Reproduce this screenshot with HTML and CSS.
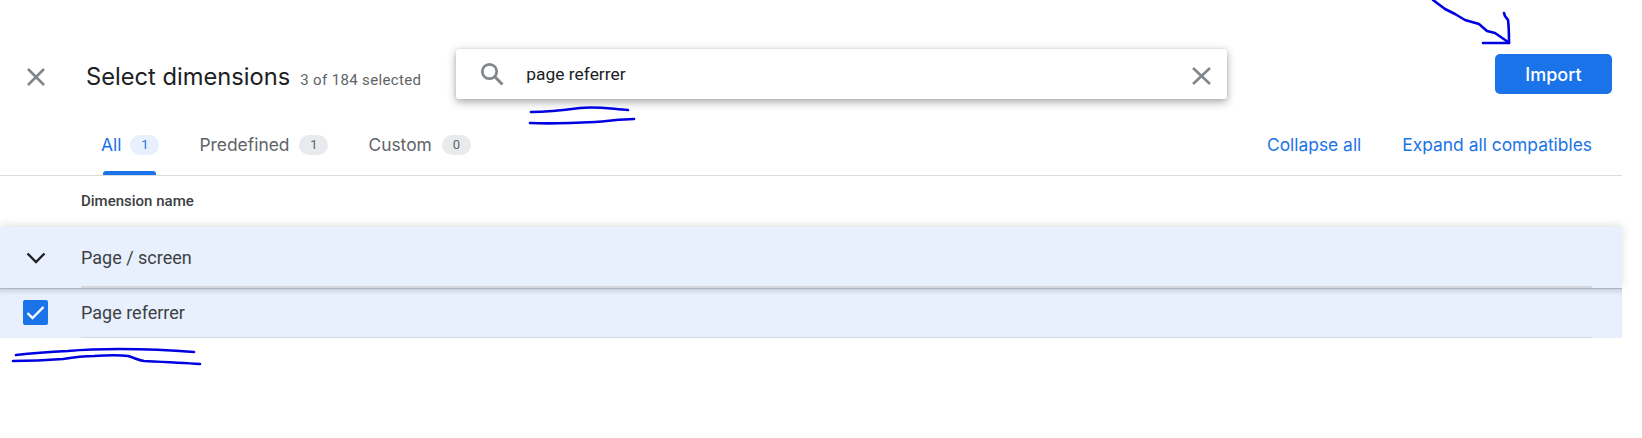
FILE: index.html
```html
<!DOCTYPE html>
<html lang="en">
<head>
<meta charset="utf-8">
<title>Select dimensions</title>
<link rel="stylesheet" href="styles.css">
</head>
<body>
<div class="page">
  <header class="header">
    <button class="icon-btn close" aria-label="Close">
      <svg width="18" height="18" viewBox="0 0 18 18"><path d="M1 1 17 17M17 1 1 17" fill="none" stroke="#80868b" stroke-width="2.6"/></svg>
    </button>
    <h1 class="title">Select dimensions</h1>
    <span class="count">3 of 184 selected</span>
    <div class="search">
      <svg class="search-icon" width="24" height="24" viewBox="0 0 24 24"><circle cx="9.5" cy="9.5" r="7.2" fill="none" stroke="#80868b" stroke-width="2.7"/><path d="M14.8 14.8 22.5 22.5" fill="none" stroke="#80868b" stroke-width="3"/></svg>
      <span class="query">page referrer</span>
      <svg class="search-clear" width="19" height="18" viewBox="0 0 19 18"><path d="M1 1 18 17M18 1 1 17" fill="none" stroke="#80868b" stroke-width="2.6"/></svg>
    </div>
    <button class="import">Import</button>
  </header>

  <nav class="tabs">
    <div class="tab active"><span>All</span><span class="badge">1</span></div>
    <div class="tab"><span>Predefined</span><span class="badge">1</span></div>
    <div class="tab"><span>Custom</span><span class="badge">0</span></div>
    <div class="actions">
      <a class="action">Collapse all</a>
      <a class="action">Expand all compatibles</a>
    </div>
  </nav>

  <div class="col-head">Dimension name</div>

  <div class="row group">
    <div class="cell-icon">
      <svg width="20" height="12" viewBox="0 0 20 12"><path d="M1.5 1.5 10 10 18.5 1.5" fill="none" stroke="#202124" stroke-width="2.4"/></svg>
    </div>
    <div class="cell-label">Page / screen</div>
  </div>

  <div class="row item">
    <div class="cell-icon">
      <span class="checkbox">
        <svg width="19" height="15" viewBox="0 0 19 15"><path d="M1.5 8 6.5 13 17.5 2" fill="none" stroke="#fff" stroke-width="2.4"/></svg>
      </span>
    </div>
    <div class="cell-label">Page referrer</div>
  </div>

  <svg class="ink" width="1642" height="438" viewBox="0 0 1642 438" aria-hidden="true">
    <path d="M531 112C550 112 565 110 580 108C596 106 612 109 628 110"/>
    <path d="M530 123C555 124 575 123 595 122C610 121 622 119 634 119"/>
    <path d="M16 355C35 353 50 352 68 351C90 349 105 349 120 349C145 349 170 350 194 352"/>
    <path d="M13 361C30 361 50 360 63 359C75 357 85 356 94 356C110 355 120 355 128 356C135 358 138 360 144 361C165 362 185 363 200 364"/>
    <path d="M1433 0L1445 9L1455 14L1465 20L1479 24L1487 31L1495 33L1508 42"/>
    <path d="M1504 13L1505 16L1508 20C1509 27 1509 34 1509 43"/>
    <path d="M1483 43L1509 43"/>
  </svg>
</div>
</body>
</html>
```
FILE: styles.css
```css
* { box-sizing: border-box; }
html, body { margin: 0; padding: 0; background: #fff; }
body { height: 438px; overflow: hidden; font-family: "Roboto", "Liberation Sans", sans-serif; }
.page { position: relative; width: 1622px; height: 438px; }

.header { display: flex; align-items: center; height: 99px; padding: 49px 10px 0 27px; }
.icon-btn { display: flex; padding: 0; border: 0; background: none; }
.close { margin: 6px 41px 0 0; }
.title { margin: 4px 0 0; font: 400 23.7px "Inter", sans-serif; color: #202124; white-space: nowrap; }
.count { margin: 12px 0 0 10px; font: 400 15px "Roboto", sans-serif; letter-spacing: .35px; color: #5f6368; white-space: nowrap; }

.search { display: flex; align-items: center; width: 771px; height: 50px; margin-left: 35px; padding: 0 16px 0 24px; background: #fff; border-radius: 3px; box-shadow: 0 3px 8px rgba(60,64,67,.45), 0 0 3px rgba(60,64,67,.12); }
.search-icon { flex: none; }
.query { margin-left: 22px; font-size: 17.4px; color: #202124; }
.search-clear { flex: none; margin: 4px 0 0 auto; }

.import { width: 117px; height: 40px; margin: 0 0 0 auto; border: 0; border-radius: 5px; background: #1a73e8; color: #fff; font: 500 18px "Inter", sans-serif; }

.tabs { display: flex; height: 77px; padding: 15px 30px 0 101px; border-bottom: 1px solid #dadce0; }
.tab { display: flex; align-items: center; gap: 10px; height: 100%; margin-right: 40px; font: 400 17.4px "Inter", sans-serif; color: #5f6368; position: relative; }
.tab.active { gap: 9px; color: #1a73e8; }
.tab.active::after { content: ""; position: absolute; left: 2px; right: 3px; bottom: 0; height: 4px; border-radius: 3px 3px 0 0; background: #1a73e8; }
.badge { display: flex; align-items: center; justify-content: center; width: 29px; height: 20px; border-radius: 10px; background: #e8eaed; font: 400 13px "Roboto", sans-serif; color: #5f6368; }
.active .badge { background: #e8f0fe; color: #1a73e8; }
.actions { display: flex; align-items: center; gap: 41px; height: 100%; margin-left: auto; }
.action { font: 400 17.4px "Inter", sans-serif; color: #1a73e8; }

.col-head { height: 51px; padding: 17px 0 0 81px; font-size: 15px; font-weight: 500; line-height: 17px; color: #3c4043; }

.row { display: flex; background: #e8f0fe; }
.cell-icon { flex: none; display: flex; align-items: center; justify-content: center; width: 71px; }
.cell-label { flex: 1; display: flex; align-items: center; margin: 0 30px 0 10px; font-size: 18px; color: #3c4043; }
.group { height: 61px; box-shadow: 0 -2px 8px rgba(60,64,67,.16); position: relative; }
.group .cell-label { padding-top: 1px; border-bottom: 2px solid #d5d8de; }
.item { height: 50px; border-top: 1px solid #b4b8c0; box-shadow: inset 0 6px 6px -5px rgba(60,64,67,.22); }
.item .cell-icon { padding-bottom: 2px; }
.item .cell-label { padding-bottom: 2px; border-bottom: 1px solid #d5d8de; }
.checkbox { display: flex; align-items: center; justify-content: center; width: 25px; height: 25px; border-radius: 2px; background: #1a73e8; }

.ink { position: absolute; left: 0; top: 0; pointer-events: none; }
.ink path { fill: none; stroke: #0000e0; stroke-width: 2.6; stroke-linecap: round; stroke-linejoin: round; }
```
